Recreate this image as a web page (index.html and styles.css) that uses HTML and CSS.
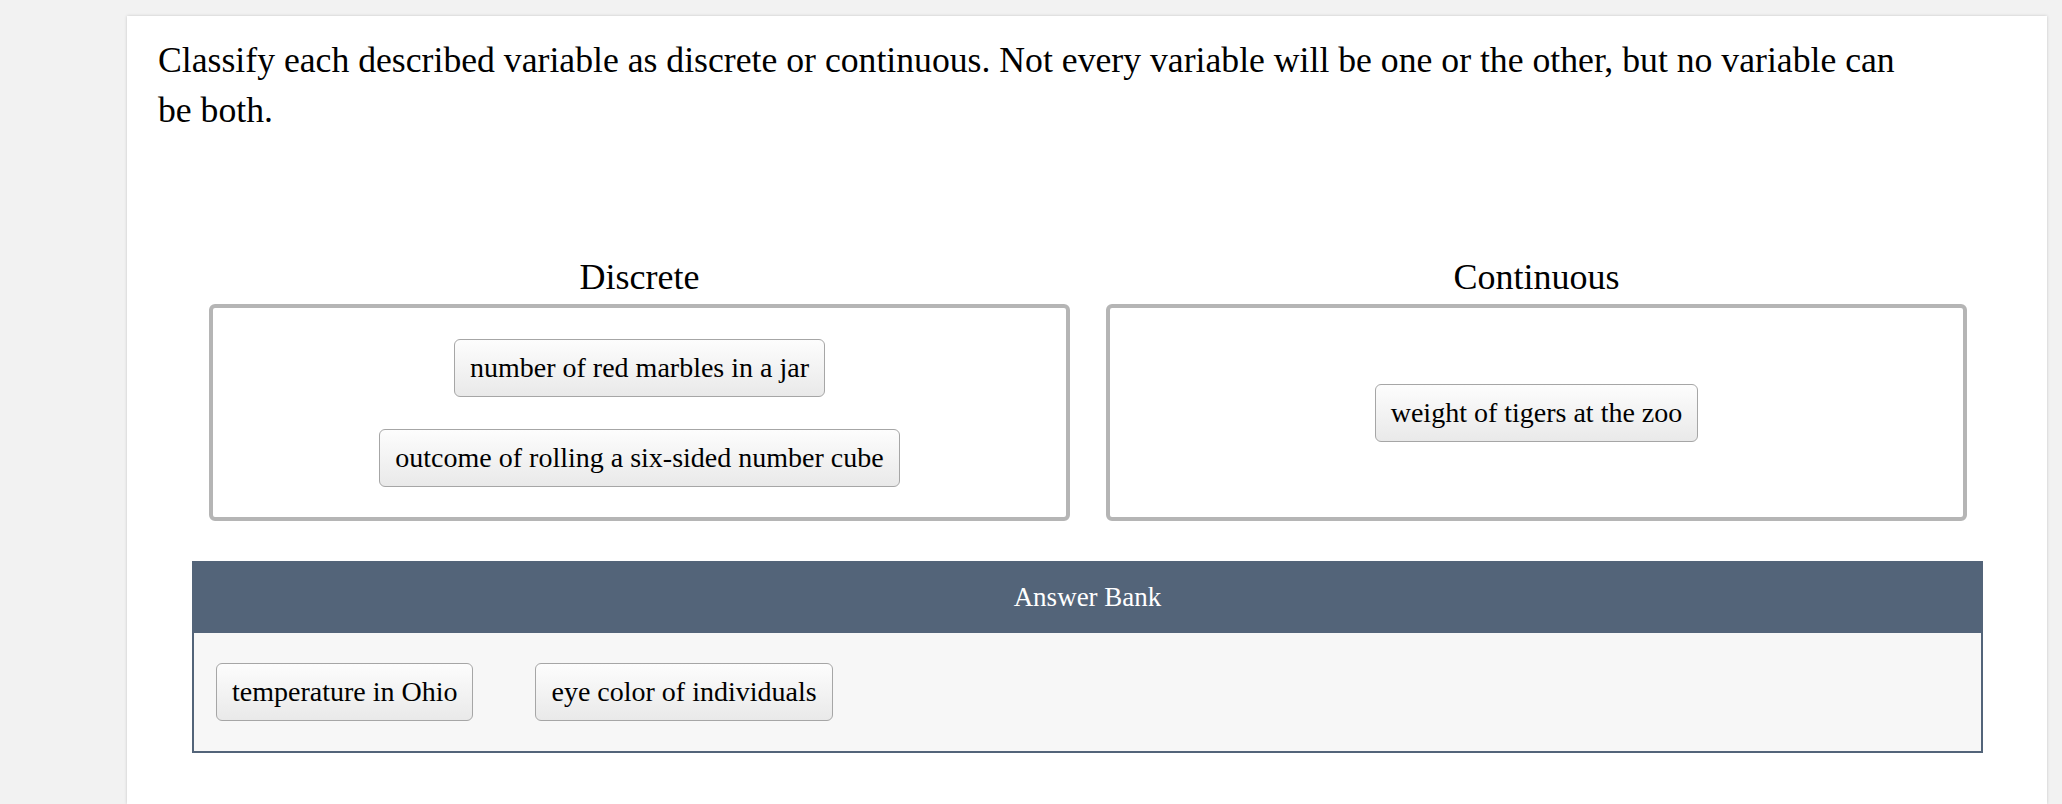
FILE: index.html
```html
<!DOCTYPE html>
<html>
<head>
<meta charset="utf-8">
<link rel="stylesheet" href="styles.css">
</head>
<body>
<div class="panel">
  <p class="prompt">Classify each described variable as discrete or continuous. Not every variable will be one or the other, but no variable can be both.</p>
  <div class="columns">
    <div class="column">
      <h3 class="col-title">Discrete</h3>
      <div class="dropbox">
        <div class="chip">number of red marbles in a jar</div>
        <div class="chip">outcome of rolling a six-sided number cube</div>
      </div>
    </div>
    <div class="column">
      <h3 class="col-title">Continuous</h3>
      <div class="dropbox">
        <div class="chip">weight of tigers at the zoo</div>
      </div>
    </div>
  </div>
  <div class="bank">
    <div class="bank-head">Answer Bank</div>
    <div class="bank-body">
      <div class="chip">temperature in Ohio</div>
      <div class="chip">eye color of individuals</div>
    </div>
  </div>
</div>
</body>
</html>
```
FILE: styles.css
```css
html, body {
  margin: 0;
  padding: 0;
  height: 100%;
  overflow: hidden;
}
body {
  background: #f2f2f2;
  font-family: "Liberation Serif", "Times New Roman", serif;
  color: #000;
  padding: 16px 15px 0 127px;
  box-sizing: border-box;
}
.panel {
  background: #fff;
  box-shadow: 0 0 3px rgba(0, 0, 0, 0.18);
  padding: 19px 30px 0 31px;
  height: 100%;
  box-sizing: border-box;
}
.prompt {
  margin: 0;
  font-size: 35.7px;
  line-height: 50px;
  max-width: 1765px;
}
.columns {
  display: grid;
  grid-template-columns: 1fr 1fr;
  column-gap: 36px;
  margin: 122px 50px 0 51px;
}
.column {
  display: flex;
  flex-direction: column;
  align-items: stretch;
}
.col-title {
  margin: 0 0 6px 0;
  font-size: 36px;
  font-weight: normal;
  line-height: 41px;
  text-align: center;
}
.dropbox {
  border: 4px solid #b5b5b5;
  border-radius: 6px;
  height: 217px;
  box-sizing: border-box;
  display: flex;
  flex-direction: column;
  align-items: center;
  justify-content: center;
  gap: 32px;
}
.chip {
  font-size: 28px;
  line-height: 32px;
  padding: 12px 15px;
  border: 1px solid #a6a6a6;
  border-radius: 6px;
  background: linear-gradient(to bottom, #fdfdfd, #e9e9e9);
  white-space: nowrap;
}
.bank {
  margin: 40px 34px 0 34px;
}
.bank-head {
  background: #536479;
  color: #fff;
  font-size: 27px;
  height: 72px;
  display: flex;
  align-items: center;
  justify-content: center;
}
.bank-body {
  background: #f7f7f7;
  border: 2px solid #536479;
  border-top: none;
  padding: 30px 22px;
  display: flex;
  gap: 62px;
}
```
